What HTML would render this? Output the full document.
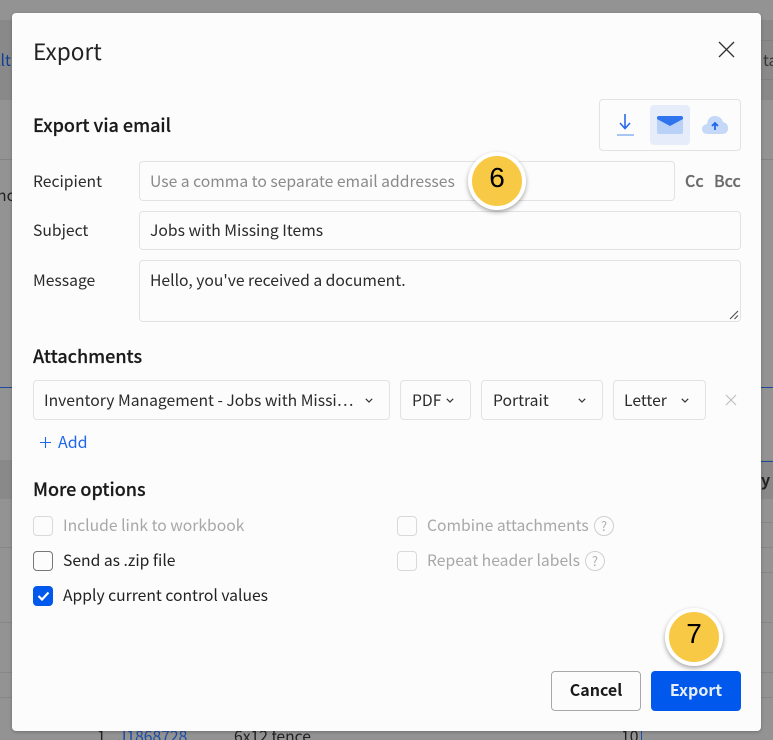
<!DOCTYPE html>
<html><head><meta charset="utf-8"><style>
*{box-sizing:border-box}
html,body{margin:0;padding:0;overflow:hidden;width:773px;height:740px}
#w{width:773px;height:740px;overflow:hidden;position:relative;background:#939393;font-family:"Noto Sans CJK JP","Liberation Sans",sans-serif;font-size:15.7px;color:#2b2b2b}
.a{position:absolute;white-space:nowrap;line-height:20px}
.bg{position:absolute}
.box{position:absolute;border:1px solid #e2e2e2;border-radius:4px;background:#fcfcfc}
.b{font-weight:500;font-size:18px;color:#1a1a1a;-webkit-text-stroke:.2px #1a1a1a}
.g{color:#a8a8a8}
.cb{position:absolute;width:20px;height:20px;border:1px solid #d9d9d9;border-radius:4px;background:#fcfcfc}
.q{position:absolute;width:20px;height:20px;border:1px solid #d0d0d0;border-radius:50%;color:#b0b0b0;font-size:13px;line-height:18px;text-align:center}
.pin{position:absolute;width:58px;height:58px;border-radius:50%;background:#f8c945;border:4px solid #fff;box-shadow:0 2px 5px rgba(0,0,0,.35);font-family:"Liberation Sans",sans-serif;font-size:28px;line-height:44px;text-align:center;color:#000}
svg{position:absolute;overflow:visible}
</style></head><body><div id="w">
<div class="bg" style="left:0;top:20px;width:773px;height:80px;background:#898989"></div>
<div class="bg" style="left:0;top:159px;width:773px;height:1px;background:#838383"></div>
<div class="bg" style="left:760px;top:40px;width:13px;height:1px;background:#7f7f7f"></div>
<div class="bg" style="left:760px;top:79px;width:13px;height:1px;background:#7f7f7f"></div>
<div class="bg" style="left:0;top:387px;width:773px;height:1px;background:#1e4a9a"></div>
<div class="bg" style="left:0;top:460px;width:773px;height:39px;background:#898989"></div>
<div class="bg" style="left:760px;top:461px;width:13px;height:1px;background:#1e4a9a"></div>
<div class="bg" style="left:0;top:547px;width:773px;height:1px;background:#878787"></div>
<div class="bg" style="left:0;top:622px;width:773px;height:1px;background:#878787"></div>
<div class="bg" style="left:0;top:672px;width:773px;height:1px;background:#878787"></div>
<div class="bg" style="left:0;top:697px;width:773px;height:1px;background:#878787"></div>
<div class="bg" style="left:760px;top:522px;width:13px;height:1px;background:#878787"></div>
<div class="bg" style="left:760px;top:572px;width:13px;height:1px;background:#878787"></div>
<div class="a" style="left:-9px;top:50px;color:#0f3f94">Alt</div>
<div class="a" style="left:-3px;top:185px;color:#222">nc</div>
<div class="a" style="left:763px;top:50px;color:#333">ta</div>
<div class="a" style="left:761px;top:469px;color:#222;font-weight:700;font-size:16px">y A</div>
<div class="a" style="left:97px;top:726px;color:#222">1</div>
<div class="a" style="left:118px;top:726px;color:#1b4ea8">J1868728</div>
<div class="a" style="left:234px;top:726px;color:#222">6x12 fence</div>
<div class="a" style="left:621px;top:726px;color:#222">10</div>
<div class="bg" style="left:641px;top:731px;width:1px;height:9px;background:#1b4ea8"></div>

<div class="bg" style="left:12px;top:13px;width:749px;height:718px;background:#fcfcfc;border-radius:4px;box-shadow:0 1px 3px rgba(0,0,0,.25)"></div>

<div class="a" style="left:33px;top:36px;font-size:22.6px;line-height:30px;color:#222">Export</div>
<svg style="left:718px;top:41px" width="17" height="17" viewBox="0 0 17 17"><path d="M1 1L16 16M16 1L1 16" stroke="#333" stroke-width="1.3" fill="none"/></svg>

<div class="a b" style="left:33px;top:115px">Export via email</div>

<div class="box" style="left:599px;top:99px;width:142px;height:52px"></div>
<div class="bg" style="left:650px;top:105px;width:40px;height:40px;border-radius:4px;background:#e6ecf9"></div>
<svg style="left:616px;top:113px" width="20" height="24" viewBox="0 0 20 24"><path d="M9 1V15M4 10L9 15.500L14 10" stroke="#2a6cec" stroke-width="1.6" fill="none"/><rect x="1" y="21" width="17" height="2" fill="#a9c5f5"/></svg>
<svg style="left:657px;top:116px" width="26" height="18" viewBox="0 0 26 18"><rect x="0" y="0" width="26" height="18" rx="2" fill="#b9d0f7"/><path d="M0 2Q0 0 2 0H24Q26 0 26 2V3L13 10L0 3Z" fill="#2f74ee"/></svg>
<svg style="left:702px;top:115px" width="26" height="20" viewBox="0 0 26 20"><path d="M6 19Q0 19 0 14Q0 10 5 9Q6 1 13 1Q19 1 21 7Q26 8 26 13Q26 19 20 19Z" fill="#c6d8f8"/><path d="M13 15V8M10 11L13 8L16 11" stroke="#1f66ea" stroke-width="1.8" fill="none"/></svg>

<div class="a" style="left:33px;top:171px">Recipient</div>
<div class="box" style="left:139px;top:161px;width:536px;height:40px"></div>
<div class="a" style="left:150px;top:171px;color:#8a8a8a">Use a comma to separate email addresses</div>
<div class="a" style="left:685px;top:170px;color:#6b6b6b;font-weight:500;font-size:16px;-webkit-text-stroke:.25px #6b6b6b">Cc</div>
<div class="a" style="left:714px;top:170px;color:#6b6b6b;font-weight:500;font-size:16px;-webkit-text-stroke:.25px #6b6b6b">Bcc</div>

<div class="a" style="left:33px;top:220px">Subject</div>
<div class="box" style="left:139px;top:211px;width:602px;height:39px"></div>
<div class="a" style="left:150px;top:220px">Jobs with Missing Items</div>

<div class="a" style="left:33px;top:270px">Message</div>
<div class="box" style="left:139px;top:260px;width:602px;height:62px"></div>
<div class="a" style="left:150px;top:270px">Hello, you've received a document.</div>
<svg style="left:729px;top:310px" width="10" height="10" viewBox="0 0 10 10"><path d="M1 9L9 1M5.500 9L9 5.500" stroke="#555" stroke-width="1.2" fill="none"/></svg>

<div class="a b" style="left:33px;top:346px">Attachments</div>

<div class="box" style="left:33px;top:380px;width:357px;height:40px"></div>
<div class="a" style="left:44px;top:390px">Inventory Management - Jobs with Missi…</div>
<svg style="left:365px;top:398px" width="8" height="5" viewBox="0 0 8 5"><path d="M.8.8L4 4L7.200.8" stroke="#333" stroke-width="1.2" fill="none"/></svg>
<div class="box" style="left:400px;top:380px;width:71px;height:40px"></div>
<div class="a" style="left:412px;top:390px">PDF</div>
<svg style="left:446px;top:398px" width="8" height="5" viewBox="0 0 8 5"><path d="M.8.8L4 4L7.200.8" stroke="#333" stroke-width="1.2" fill="none"/></svg>
<div class="box" style="left:481px;top:380px;width:122px;height:40px"></div>
<div class="a" style="left:493px;top:390px">Portrait</div>
<svg style="left:578px;top:398px" width="8" height="5" viewBox="0 0 8 5"><path d="M.8.8L4 4L7.200.8" stroke="#333" stroke-width="1.2" fill="none"/></svg>
<div class="box" style="left:613px;top:380px;width:93px;height:40px"></div>
<div class="a" style="left:624px;top:390px">Letter</div>
<svg style="left:681px;top:398px" width="8" height="5" viewBox="0 0 8 5"><path d="M.8.8L4 4L7.200.8" stroke="#333" stroke-width="1.2" fill="none"/></svg>
<svg style="left:725px;top:394px" width="12" height="12" viewBox="0 0 12 12"><path d="M1 1L11 11M11 1L1 11" stroke="#bdbdbd" stroke-width="1.1" fill="none"/></svg>

<svg style="left:40px;top:437px" width="11" height="11" viewBox="0 0 11 11"><path d="M5.500 0V11M0 5.500H11" stroke="#1f66ea" stroke-width="1.1" fill="none"/></svg>
<div class="a" style="left:58px;top:431px;color:#1f66ea;font-size:16px">Add</div>

<div class="a b" style="left:33px;top:479px">More options</div>

<div class="cb" style="left:33px;top:516px"></div>
<div class="a g" style="left:63px;top:515px">Include link to workbook</div>
<div class="cb" style="left:33px;top:551px;border-color:#777"></div>
<div class="a" style="left:63px;top:550px;color:#222">Send as .zip file</div>
<div class="cb" style="left:33px;top:586px;background:#0158ed;border-color:#0158ed"></div>
<svg style="left:37px;top:591px" width="13" height="10" viewBox="0 0 13 10"><path d="M1.500 5L5 8.500L11.500 1.500" stroke="#fff" stroke-width="2.200" fill="none"/></svg>
<div class="a" style="left:63px;top:585px;color:#222">Apply current control values</div>

<div class="cb" style="left:397px;top:516px"></div>
<div class="a g" style="left:427px;top:515px">Combine attachments</div>
<div class="q" style="left:594px;top:516px">?</div>
<div class="cb" style="left:397px;top:551px"></div>
<div class="a g" style="left:427px;top:550px">Repeat header labels</div>
<div class="q" style="left:585px;top:551px">?</div>

<div class="box" style="left:551px;top:671px;width:90px;height:40px;border-color:#a8a8a8;background:#fcfcfc"></div>
<div class="a" style="left:551px;top:679px;width:90px;text-align:center;font-weight:700;font-size:16px;color:#1a1a1a">Cancel</div>
<div class="bg" style="left:651px;top:671px;width:90px;height:40px;background:#0158ed;border-radius:4px"></div>
<div class="a" style="left:651px;top:679px;width:90px;text-align:center;font-weight:700;font-size:16px;color:#e8effc">Export</div>

<div class="pin" style="left:468px;top:152px">6</div>
<div class="pin" style="left:665px;top:608px">7</div>
</div></body></html>
